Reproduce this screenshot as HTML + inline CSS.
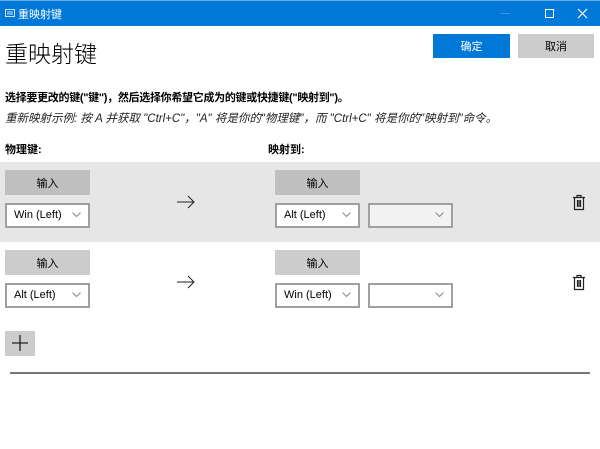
<!DOCTYPE html>
<html><head><meta charset="utf-8"><style>
*{box-sizing:border-box;margin:0;padding:0}
body{width:600px;height:449px;background:#fff;font-family:"Liberation Sans","Noto Sans CJK SC",sans-serif;position:relative;overflow:hidden;color:#000}
.a{position:absolute}
.tb{left:0;top:0;width:600px;height:26px;background:#0078d7;border-top:1px solid #6aa9e6}
.btn{position:absolute;display:flex;align-items:center;justify-content:center;font-size:11px}
.dd{position:absolute;width:85px;height:25px;border:2px solid #a0a0a0;background:#fff;font-size:11px;padding-left:7px;line-height:21px}
.dd svg{position:absolute;right:7px;top:7px}
</style></head><body>
<div class="a tb"></div>
<svg class="a" style="left:5px;top:9px" width="10" height="8"><rect x="0.5" y="0.5" width="9" height="7" fill="none" stroke="#cfe3f7"/><rect x="2" y="2.5" width="6" height="1" fill="#cfe3f7"/><rect x="2" y="4.5" width="6" height="1" fill="#cfe3f7"/></svg>
<div class="a" style="left:18px;top:6px;font-size:11px;color:#fff">重映射键</div>
<div class="a" style="left:500px;top:13px;width:10px;height:1px;background:#3d93e0"></div>
<div class="a" style="left:545px;top:9px;width:9px;height:9px;border:1px solid #fff"></div>
<svg class="a" style="left:577px;top:8px" width="11" height="11"><path d="M1 1L10 10M10 1L1 10" stroke="#fff" stroke-width="1.2"/></svg>
<div class="a" style="left:5px;top:35px;font-size:23px;font-weight:300">重映射键</div>
<div class="btn" style="left:433px;top:34px;width:77px;height:24px;background:#0078d7;color:#fff">确定</div>
<div class="btn" style="left:518px;top:34px;width:76px;height:24px;background:#ccc">取消</div>
<div class="a" style="left:5px;top:89px;font-size:11px;font-weight:bold;letter-spacing:-0.3px">选择要更改的键("键")，然后选择你希望它成为的键或快捷键("映射到")。</div>
<div class="a" style="left:5px;top:110px;font-size:11.5px;font-style:italic;color:#222">重新映射示例: 按 A 并获取 "Ctrl+C"，"A" 将是你的"物理键"，而 "Ctrl+C" 将是你的"映射到"命令。</div>
<div class="a" style="left:5px;top:141px;font-size:11px;font-weight:bold">物理键:</div>
<div class="a" style="left:268px;top:141px;font-size:11px;font-weight:bold">映射到:</div>
<div class="a" style="left:0;top:162px;width:600px;height:80px;background:#e6e6e6"></div>

<div class="btn" style="left:5px;top:170px;width:85px;height:25px;background:#bfbfbf">输入</div>
<div class="dd" style="left:5px;top:203px">Win (Left)<svg width="9" height="6"><path d="M0.5 0.5L4.5 4.5L8.5 0.5" fill="none" stroke="#888"/></svg></div>
<svg class="a" style="left:177px;top:195px" width="18" height="14"><path d="M0 7H17M11 1L17 7L11 13" fill="none" stroke="#222" stroke-width="1"/></svg>
<div class="btn" style="left:275px;top:170px;width:85px;height:25px;background:#bfbfbf">输入</div>
<div class="dd" style="left:275px;top:203px">Alt (Left)<svg width="9" height="6"><path d="M0.5 0.5L4.5 4.5L8.5 0.5" fill="none" stroke="#888"/></svg></div>
<div class="dd" style="left:368px;top:203px;background:#f2f2f2"><svg width="9" height="6"><path d="M0.5 0.5L4.5 4.5L8.5 0.5" fill="none" stroke="#888"/></svg></div>
<svg class="a" style="left:572px;top:194px" width="14" height="17"><path d="M1 3.5H13M5 3.5V1.5H9V3.5M2.5 3.5V15.5H11.5V3.5M5.5 6V13M7 6V13M8.5 6V13" fill="none" stroke="#222" stroke-width="1.2"/></svg>

<div class="btn" style="left:5px;top:250px;width:85px;height:25px;background:#ccc">输入</div>
<div class="dd" style="left:5px;top:283px">Alt (Left)<svg width="9" height="6"><path d="M0.5 0.5L4.5 4.5L8.5 0.5" fill="none" stroke="#888"/></svg></div>
<svg class="a" style="left:177px;top:275px" width="18" height="14"><path d="M0 7H17M11 1L17 7L11 13" fill="none" stroke="#222" stroke-width="1"/></svg>
<div class="btn" style="left:275px;top:250px;width:85px;height:25px;background:#ccc">输入</div>
<div class="dd" style="left:275px;top:283px">Win (Left)<svg width="9" height="6"><path d="M0.5 0.5L4.5 4.5L8.5 0.5" fill="none" stroke="#888"/></svg></div>
<div class="dd" style="left:368px;top:283px"><svg width="9" height="6"><path d="M0.5 0.5L4.5 4.5L8.5 0.5" fill="none" stroke="#888"/></svg></div>
<svg class="a" style="left:572px;top:274px" width="14" height="17"><path d="M1 3.5H13M5 3.5V1.5H9V3.5M2.5 3.5V15.5H11.5V3.5M5.5 6V13M7 6V13M8.5 6V13" fill="none" stroke="#222" stroke-width="1.2"/></svg>

<div class="a" style="left:5px;top:331px;width:30px;height:25px;background:#ccc"></div>
<svg class="a" style="left:11px;top:334px" width="18" height="18"><path d="M9 1V17M1 9H17" stroke="#222" stroke-width="1.3"/></svg>
<div class="a" style="left:10px;top:372px;width:580px;height:2px;background:#777"></div>
</body></html>
